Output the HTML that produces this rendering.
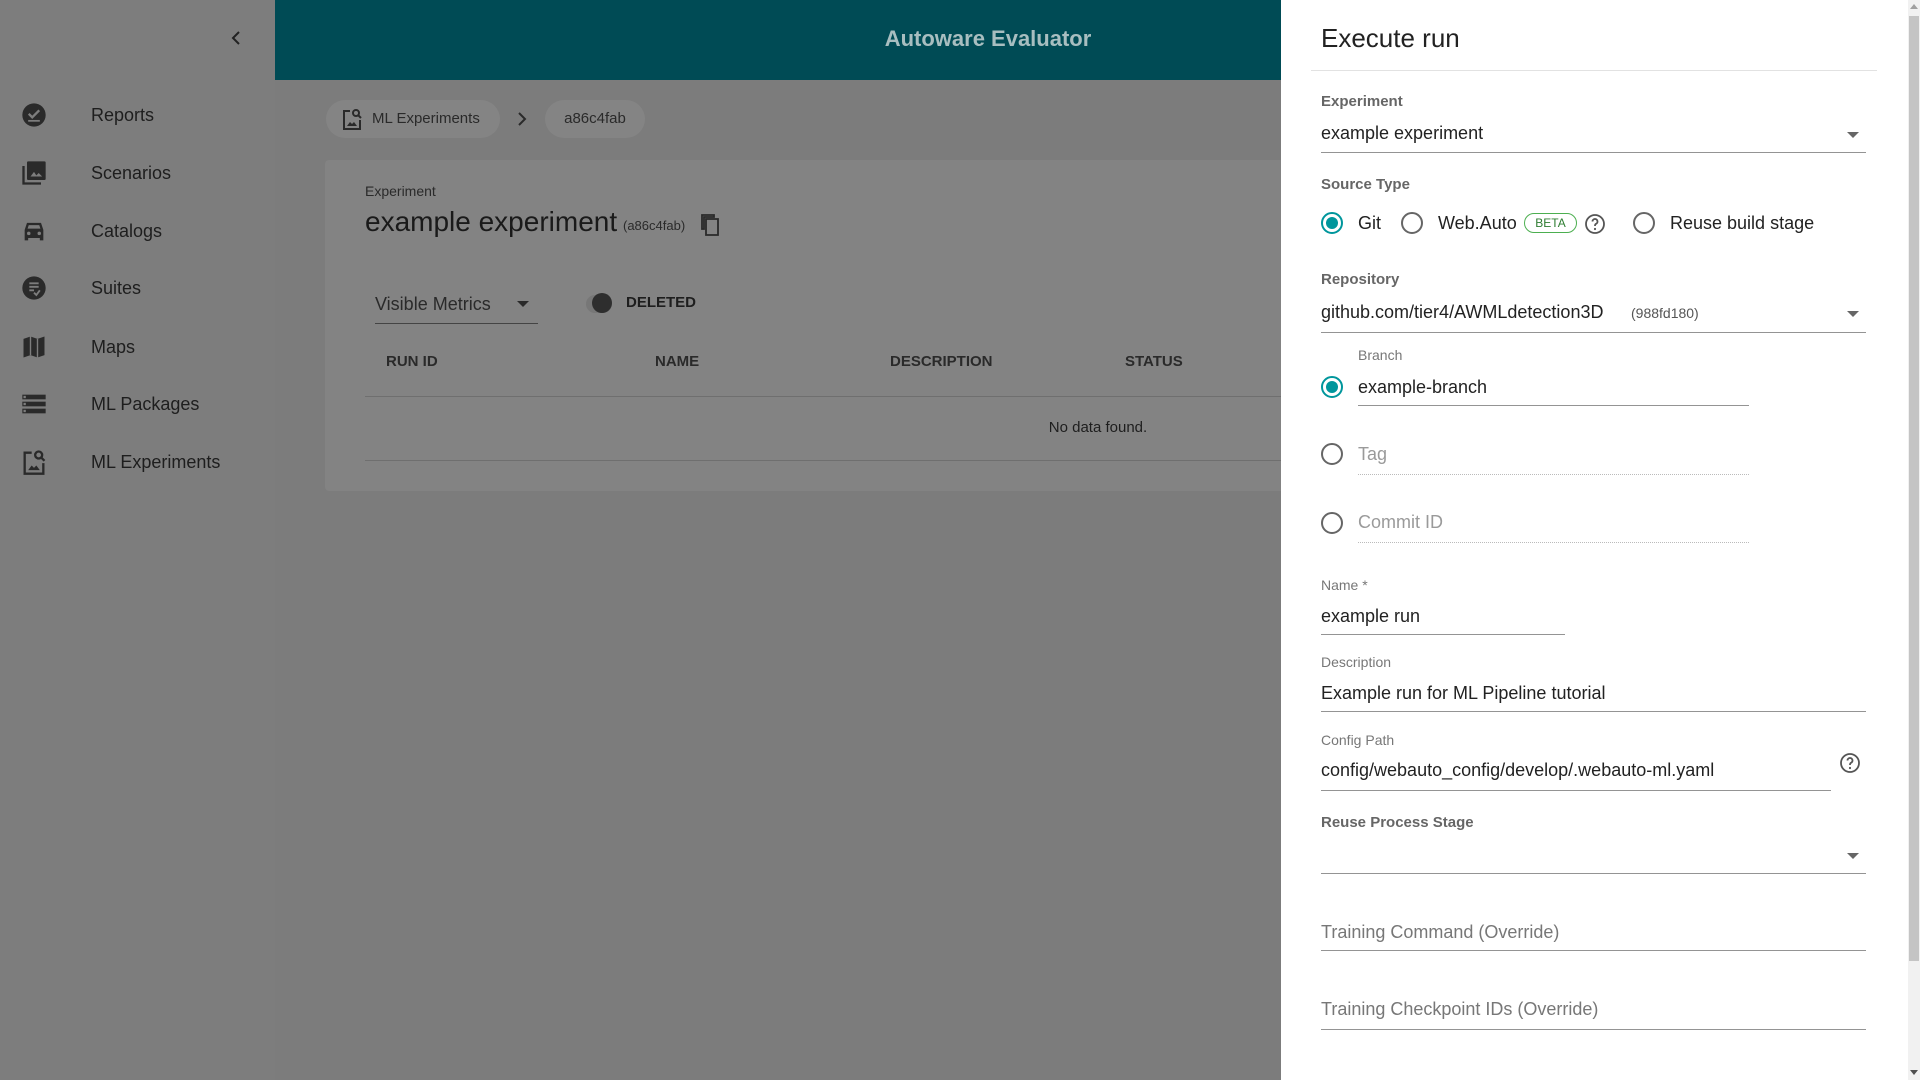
<!DOCTYPE html>
<html><head><meta charset="utf-8"><style>
*{margin:0;padding:0;box-sizing:border-box}
body{width:1920px;height:1080px;overflow:hidden;position:relative;font-family:"Liberation Sans",Arial,sans-serif;background:#7c7c7c}
.a{position:absolute;white-space:nowrap}
.c{line-height:24px;height:24px}
.side{left:0;top:0;width:275px;height:1080px;background:#7d7d7d}
.nav{color:#1e1e1e;font-size:18px}
.ico{position:absolute;width:24px;height:24px}
.big{width:28px;height:28px}
.lbl{font-size:15px;color:#666;font-weight:bold}
.slbl{font-size:14px;color:#777}
.val{font-size:18px;color:#222}
.ph{font-size:18px;color:#9a9a9a}
.ul{position:absolute;height:1px;background:#949494}
.dot{position:absolute;height:1px;border-top:1px dotted #bbb}
.rad{position:absolute;width:22px;height:22px;border-radius:50%;border:2px solid #666}
.rad.on{border-color:#00969c}
.rad.on::after{content:"";position:absolute;left:3px;top:3px;width:12px;height:12px;border-radius:50%;background:#00969c}
.arr{position:absolute;width:0;height:0;border-left:6px solid transparent;border-right:6px solid transparent;border-top:6px solid #666}
</style></head><body>
<div class="a side"></div>
<svg class="ico" style="left:224px;top:26px" viewBox="0 0 24 24"><path d="M15 6l-6 6 6 6" fill="none" stroke="#222" stroke-width="2"/></svg>
<svg class="ico big" style="left:20px;top:101px" viewBox="0 0 24 24"><circle cx="12" cy="12" r="10" fill="#2a2a2a"/><path d="M7.5 11l3 3 6-6" stroke="#7d7d7d" stroke-width="2" fill="none"/><path d="M7 17h10" stroke="#7d7d7d" stroke-width="1.5"/></svg>
<svg class="ico big" style="left:20px;top:159px" viewBox="0 0 24 24"><path d="M2 6v16h16v-2H4V6z" fill="#2a2a2a"/><rect x="6" y="2" width="16" height="16" rx="1" fill="#2a2a2a"/><path d="M9 15l3-4 2 3 2-2 3 3z" fill="#7d7d7d"/></svg>
<svg class="ico big" style="left:20px;top:217px" viewBox="0 0 24 24"><path d="M4 11l2-6h12l2 6v9h-3v-2H7v2H4z" fill="#2a2a2a"/><circle cx="7.5" cy="14" r="1.5" fill="#7d7d7d"/><circle cx="16.5" cy="14" r="1.5" fill="#7d7d7d"/><path d="M6.5 10l1-3h9l1 3z" fill="#7d7d7d"/></svg>
<svg class="ico big" style="left:20px;top:274px" viewBox="0 0 24 24"><circle cx="12" cy="12" r="10" fill="#2a2a2a"/><path d="M8 8h8M8 11h8M8 14h4M12 16l2 2 3-4" stroke="#7d7d7d" stroke-width="1.6" fill="none"/></svg>
<svg class="ico big" style="left:20px;top:333px" viewBox="0 0 24 24"><path d="M3 5l6-2 6 2 6-2v16l-6 2-6-2-6 2z" fill="#2a2a2a"/><path d="M9 3v16M15 5v16" stroke="#7d7d7d" stroke-width="1.2"/></svg>
<svg class="ico big" style="left:20px;top:390px" viewBox="0 0 24 24"><rect x="2" y="4" width="20" height="4" fill="#2a2a2a"/><rect x="2" y="10" width="20" height="4" fill="#2a2a2a"/><rect x="2" y="16" width="20" height="4" fill="#2a2a2a"/><rect x="3" y="5" width="2" height="2" fill="#7d7d7d"/><rect x="3" y="11" width="2" height="2" fill="#7d7d7d"/><rect x="3" y="17" width="2" height="2" fill="#7d7d7d"/></svg>
<svg class="ico big" style="left:20px;top:448px" viewBox="0 0 24 24"><path d="M10 4H4v18h16v-9" fill="none" stroke="#2a2a2a" stroke-width="2"/><circle cx="16" cy="6" r="3" fill="none" stroke="#2a2a2a" stroke-width="2"/><path d="M18 8l3 3" stroke="#2a2a2a" stroke-width="2"/><path d="M7 19l3-4 2 2 2-2 3 4z" fill="#2a2a2a"/></svg>
<div class="a nav c" style="left:91px;top:103px">Reports</div>
<div class="a nav c" style="left:91px;top:161px">Scenarios</div>
<div class="a nav c" style="left:91px;top:219px">Catalogs</div>
<div class="a nav c" style="left:91px;top:276px">Suites</div>
<div class="a nav c" style="left:91px;top:335px">Maps</div>
<div class="a nav c" style="left:91px;top:392px">ML Packages</div>
<div class="a nav c" style="left:91px;top:450px">ML Experiments</div>

<div class="a" style="left:275px;top:0;width:1006px;height:80px;background:#004b55"></div>
<div class="a" style="left:275px;top:24px;width:1426px;text-align:center;font-size:22px;font-weight:bold;color:#a8bec0;line-height:30px">Autoware Evaluator</div>

<div class="a" style="left:326px;top:100px;width:174px;height:38px;border-radius:19px;background:#848484"></div>
<svg class="ico" style="left:340px;top:107px" viewBox="0 0 24 24"><path d="M10 4H4v18h16v-9" fill="none" stroke="#2a2a2a" stroke-width="2"/><circle cx="16" cy="6" r="3" fill="none" stroke="#2a2a2a" stroke-width="2"/><path d="M18 8l3 3" stroke="#2a2a2a" stroke-width="2"/><path d="M7 19l3-4 2 2 2-2 3 4z" fill="#2a2a2a"/></svg>
<div class="a c" style="left:372px;top:107px;font-size:15px;color:#2a2a2a">ML Experiments</div>
<svg class="ico" style="left:510px;top:107px" viewBox="0 0 24 24"><path d="M9 6l6 6-6 6" fill="none" stroke="#2a2a2a" stroke-width="2"/></svg>
<div class="a" style="left:545px;top:100px;width:100px;height:38px;border-radius:19px;background:#848484"></div>
<div class="a c" style="left:545px;top:107px;width:100px;text-align:center;font-size:15px;color:#2a2a2a">a86c4fab</div>

<div class="a" style="left:325px;top:160px;width:960px;height:331px;background:#838383;border-radius:4px"></div>
<div class="a c" style="left:365px;top:179px;font-size:14px;color:#2a2a2a">Experiment</div>
<div class="a" style="left:365px;top:204px;font-size:28px;color:#1a1a1a;line-height:36px">example experiment</div>
<div class="a c" style="left:623px;top:214px;font-size:13px;color:#2a2a2a">(a86c4fab)</div>
<svg class="ico" style="left:698px;top:214px" viewBox="0 0 24 24"><path d="M16 1H4v14h2V3h10zM8 5h12v16H8z" fill="none" stroke="#2a2a2a" stroke-width="1.8"/></svg>
<div class="a c" style="left:375px;top:292px;font-size:18px;color:#2a2a2a">Visible Metrics</div>
<div class="arr" style="left:517px;top:301px;border-top-color:#2a2a2a"></div>
<div class="ul" style="left:375px;top:323px;width:163px;background:#444"></div>
<div class="a" style="left:586px;top:295px;width:26px;height:18px;border-radius:9px;background:#777"></div>
<div class="a" style="left:592px;top:293px;width:20px;height:20px;border-radius:50%;background:#2e2e2e"></div>
<div class="a c" style="left:626px;top:291px;font-size:15px;font-weight:bold;color:#1e1e1e">DELETED</div>
<div class="a c" style="left:386px;top:350px;font-size:15px;font-weight:bold;color:#2a2a2a">RUN ID</div>
<div class="a c" style="left:655px;top:350px;font-size:15px;font-weight:bold;color:#2a2a2a">NAME</div>
<div class="a c" style="left:890px;top:350px;font-size:15px;font-weight:bold;color:#2a2a2a">DESCRIPTION</div>
<div class="a c" style="left:1125px;top:350px;font-size:15px;font-weight:bold;color:#2a2a2a">STATUS</div>
<div class="ul" style="left:365px;top:396px;width:920px;background:#6f6f6f"></div>
<div class="a c" style="left:1000px;top:416px;width:196px;text-align:center;font-size:15px;color:#1e1e1e">No data found.</div>
<div class="ul" style="left:365px;top:460px;width:920px;background:#6f6f6f"></div>

<div class="a" style="left:1281px;top:0;width:627px;height:1080px;background:#fff"></div>
<div class="a" style="left:1908px;top:0;width:12px;height:1080px;background:#f1f1f1"></div>
<div class="a" style="left:1909px;top:16px;width:10px;height:945px;background:#c4c4c4"></div>
<div class="a" style="left:1910px;top:4px;border-left:4px solid transparent;border-right:4px solid transparent;border-bottom:5px solid #a0a0a0;width:0"></div>
<div class="a" style="left:1910px;top:1070px;border-left:4px solid transparent;border-right:4px solid transparent;border-top:5px solid #505050;width:0"></div>

<div class="a" style="left:1321px;top:22px;font-size:26px;color:#222;line-height:32px">Execute run</div>
<div class="ul" style="left:1311px;top:70px;width:566px;background:#e2e2e2"></div>

<div class="a c lbl" style="left:1321px;top:90px">Experiment</div>
<div class="a c val" style="left:1321px;top:121px">example experiment</div>
<div class="arr" style="left:1847px;top:132px"></div>
<div class="ul" style="left:1321px;top:152px;width:545px"></div>

<div class="a c lbl" style="left:1321px;top:173px">Source Type</div>
<div class="rad on" style="left:1321px;top:212px"></div>
<div class="a c val" style="left:1358px;top:211px">Git</div>
<div class="rad" style="left:1401px;top:212px"></div>
<div class="a c val" style="left:1438px;top:211px">Web.Auto</div>
<div class="a" style="left:1524px;top:213px;width:53px;height:20px;border:1px solid #4caf50;border-radius:10px;font-size:12px;color:#2e7d32;text-align:center;line-height:18px">BETA</div>
<svg class="ico" style="left:1583px;top:212px" viewBox="0 0 24 24"><circle cx="12" cy="12" r="9" fill="none" stroke="#555" stroke-width="1.8"/><path d="M9.5 9.5a2.5 2.5 0 1 1 3.5 2.3c-.7.4-1 .9-1 1.7v.5" fill="none" stroke="#555" stroke-width="1.8"/><circle cx="12" cy="17" r="1.1" fill="#555"/></svg>
<div class="rad" style="left:1633px;top:212px"></div>
<div class="a c val" style="left:1670px;top:211px">Reuse build stage</div>

<div class="a c lbl" style="left:1321px;top:268px">Repository</div>
<div class="a c val" style="left:1321px;top:300px">github.com/tier4/AWMLdetection3D</div>
<div class="a c" style="left:1631px;top:301px;font-size:14px;color:#555">(988fd180)</div>
<div class="arr" style="left:1847px;top:311px"></div>
<div class="ul" style="left:1321px;top:332px;width:545px"></div>

<div class="a c slbl" style="left:1358px;top:343px">Branch</div>
<div class="rad on" style="left:1321px;top:376px"></div>
<div class="a c val" style="left:1358px;top:375px">example-branch</div>
<div class="ul" style="left:1358px;top:405px;width:391px"></div>
<div class="rad" style="left:1321px;top:443px"></div>
<div class="a c ph" style="left:1358px;top:442px">Tag</div>
<div class="dot" style="left:1358px;top:474px;width:391px"></div>
<div class="rad" style="left:1321px;top:512px"></div>
<div class="a c ph" style="left:1358px;top:510px">Commit ID</div>
<div class="dot" style="left:1358px;top:542px;width:391px"></div>

<div class="a c slbl" style="left:1321px;top:573px">Name *</div>
<div class="a c val" style="left:1321px;top:604px">example run</div>
<div class="ul" style="left:1321px;top:634px;width:244px"></div>

<div class="a c slbl" style="left:1321px;top:650px">Description</div>
<div class="a c val" style="left:1321px;top:681px">Example run for ML Pipeline tutorial</div>
<div class="ul" style="left:1321px;top:711px;width:545px"></div>

<div class="a c slbl" style="left:1321px;top:728px">Config Path</div>
<div class="a c val" style="left:1321px;top:758px">config/webauto_config/develop/.webauto-ml.yaml</div>
<div class="ul" style="left:1321px;top:790px;width:510px"></div>
<svg class="ico" style="left:1838px;top:751px" viewBox="0 0 24 24"><circle cx="12" cy="12" r="9" fill="none" stroke="#555" stroke-width="1.8"/><path d="M9.5 9.5a2.5 2.5 0 1 1 3.5 2.3c-.7.4-1 .9-1 1.7v.5" fill="none" stroke="#555" stroke-width="1.8"/><circle cx="12" cy="17" r="1.1" fill="#555"/></svg>

<div class="a c lbl" style="left:1321px;top:811px">Reuse Process Stage</div>
<div class="arr" style="left:1847px;top:853px"></div>
<div class="ul" style="left:1321px;top:873px;width:545px"></div>

<div class="a c ph" style="left:1321px;top:920px;color:#777">Training Command (Override)</div>
<div class="ul" style="left:1321px;top:950px;width:545px"></div>
<div class="a c ph" style="left:1321px;top:997px;color:#777">Training Checkpoint IDs (Override)</div>
<div class="ul" style="left:1321px;top:1029px;width:545px"></div>
</body></html>
